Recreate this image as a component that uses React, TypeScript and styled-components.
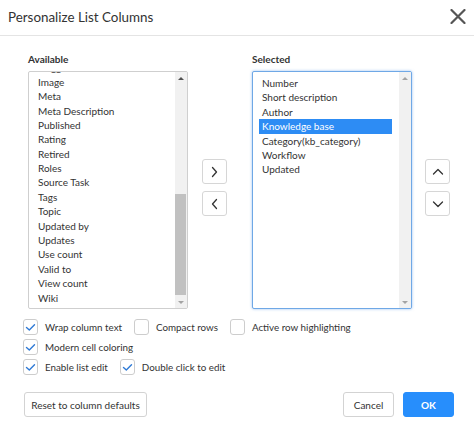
import React from 'react';
import styled, { createGlobalStyle } from 'styled-components';

const Global = createGlobalStyle`
  html, body { margin: 0; padding: 0; background: #fff; }
  body { font-family: Lato, "Noto Sans", sans-serif; color: #333; }
  * { box-sizing: border-box; }
`;

const Dialog = styled.div`
  width: 474px;
  height: 438px;
  display: flex;
  flex-direction: column;
  background: #fff;
`;

const Header = styled.div`
  height: 36px;
  display: flex;
  align-items: center;
  justify-content: space-between;
  padding: 0 8px 2px 8px;
  border-bottom: 1px solid #e4e4e4;
`;

const Title = styled.h1`
  margin: 0;
  font-size: 13.4px;
  font-weight: 400;
  color: #333;
`;

const CloseButton = styled.button`
  border: 0;
  background: none;
  padding: 0;
  width: 16px;
  height: 16px;
  display: flex;
  align-items: center;
  justify-content: center;
  cursor: pointer;
`;

const Body = styled.div`
  display: flex;
  flex-direction: column;
  padding: 17px 20px 0 23px;
`;

const Columns = styled.div`
  display: grid;
  grid-template-columns: 160px 14px 25px 25px 160px 13px 25px;
  grid-template-rows: 12px 238px;
  row-gap: 6px;
  margin-left: 5px;
`;

const Label = styled.div<{ $col: number }>`
  grid-column: ${(p) => p.$col};
  grid-row: 1;
  font-size: 10px;
  font-weight: 700;
  line-height: 12px;
  color: #333;
`;

const ListBox = styled.div<{ $col: number; $focused?: boolean }>`
  grid-column: ${(p) => p.$col};
  grid-row: 2;
  display: flex;
  border: 1px solid ${(p) => (p.$focused ? '#6fa8e6' : '#cfcfcf')};
  border-radius: 2px;
  box-shadow: ${(p) => (p.$focused ? '0 0 3px rgba(70,140,230,0.55)' : 'none')};
  background: #fff;
  overflow: hidden;
`;

const ListArea = styled.div<{ $end?: boolean }>`
  flex: 1;
  display: flex;
  flex-direction: column;
  justify-content: ${(p) => (p.$end ? 'flex-end' : 'flex-start')};
  overflow: hidden;
  padding: 4px 7px 3px 6px;
`;

const Option = styled.div<{ $selected?: boolean }>`
  flex: none;
  font-size: 10px;
  line-height: 14.4px;
  height: 14.4px;
  padding-left: 3px;
  white-space: nowrap;
  color: ${(p) => (p.$selected ? '#fff' : '#333')};
  background: ${(p) => (p.$selected ? '#2d8cf4' : 'transparent')};
`;

const ScrollBar = styled.div`
  width: 12px;
  flex: none;
  background: #f1f1f1;
  display: flex;
  flex-direction: column;
`;

const ScrollArrow = styled.div<{ $down?: boolean; $active?: boolean }>`
  height: 12px;
  flex: none;
  display: flex;
  align-items: center;
  justify-content: center;
  &::before {
    content: '';
    width: 0;
    height: 0;
    border-left: 3px solid transparent;
    border-right: 3px solid transparent;
    ${(p) =>
      p.$down
        ? `border-top: 3px solid ${p.$active ? '#505050' : '#a3a3a3'};`
        : `border-bottom: 3px solid ${p.$active ? '#505050' : '#a3a3a3'};`}
  }
`;

const Track = styled.div`
  flex: 1;
  display: flex;
  flex-direction: column;
  justify-content: flex-end;
  padding: 0 1px 1px 0;
`;

const Thumb = styled.div<{ $size: number }>`
  height: ${(p) => p.$size}px;
  background: #c1c1c1;
`;

const Stack = styled.div<{ $col: number }>`
  grid-column: ${(p) => p.$col};
  grid-row: 2;
  display: flex;
  flex-direction: column;
  justify-content: center;
  gap: 7px;
  padding-bottom: 5px;
`;

const IconButton = styled.button`
  width: 25px;
  height: 25px;
  padding: 0;
  border: 1px solid #d6d6d6;
  border-radius: 3px;
  background: #fff;
  display: flex;
  align-items: center;
  justify-content: center;
  cursor: pointer;
`;

const Options = styled.div`
  display: flex;
  flex-direction: column;
  margin-top: 8px;
`;

const OptionRow = styled.div`
  display: flex;
  align-items: center;
  height: 20px;
`;

const CheckLabel = styled.label`
  display: flex;
  align-items: center;
  gap: 7px;
  margin-right: 12px;
  font-size: 9.8px;
  color: #333;
  white-space: nowrap;
`;

const CheckBox = styled.span<{ $checked?: boolean }>`
  width: 15px;
  height: 16px;
  border: 1px solid #cdcdcd;
  border-radius: 3px;
  background: #fff;
  display: flex;
  align-items: center;
  justify-content: center;
`;

const Footer = styled.div`
  display: flex;
  justify-content: space-between;
  align-items: center;
  margin-top: 15px;
  padding-left: 1px;
`;

const ButtonGroup = styled.div`
  display: flex;
  gap: 9px;
`;

const Button = styled.button<{ $primary?: boolean; $width: number }>`
  width: ${(p) => p.$width}px;
  height: 25px;
  padding: 0;
  border-radius: 3px;
  border: 1px solid ${(p) => (p.$primary ? '#278efc' : '#d3d3d3')};
  background: ${(p) => (p.$primary ? '#278efc' : '#fff')};
  color: ${(p) => (p.$primary ? '#fff' : '#333')};
  font-family: Lato, "Noto Sans", sans-serif;
  font-size: 10px;
  font-weight: ${(p) => (p.$primary ? 700 : 400)};
  cursor: pointer;
`;

const Chevron = ({ dir }: { dir: 'left' | 'right' | 'up' | 'down' }) => {
  const d = {
    right: 'M3.5 1.5 L7.5 6 L3.5 10.5',
    left: 'M7.5 1.5 L3.5 6 L7.5 10.5',
    up: 'M1.5 8 L6 3.5 L10.5 8',
    down: 'M1.5 4 L6 8.5 L10.5 4',
  }[dir];
  return (
    <svg width="12" height="12" viewBox="0 0 12 12">
      <path d={d} fill="none" stroke="#333" strokeWidth="1.3" strokeLinecap="round" strokeLinejoin="round" />
    </svg>
  );
};

const Check = () => (
  <svg width="11" height="9" viewBox="0 0 11 9">
    <path d="M1.5 4.5 L4.3 7 L9.5 1.8" fill="none" stroke="#2f7ad6" strokeWidth="1.4" strokeLinecap="round" strokeLinejoin="round" />
  </svg>
);

const available = [
  'Flagged',
  'Image', 'Meta', 'Meta Description', 'Published', 'Rating', 'Retired', 'Roles',
  'Source Task', 'Tags', 'Topic', 'Updated by', 'Updates', 'Use count', 'Valid to',
  'View count', 'Wiki',
];

const selected = [
  'Number', 'Short description', 'Author', 'Knowledge base',
  'Category(kb_category)', 'Workflow', 'Updated',
];

const Opt = ({ label, checked }: { label: string; checked?: boolean }) => (
  <CheckLabel>
    <CheckBox $checked={checked}>{checked && <Check />}</CheckBox>
    {label}
  </CheckLabel>
);

export default function App() {
  return (
    <Dialog>
      <Global />
      <Header>
        <Title>Personalize List Columns</Title>
        <CloseButton aria-label="Close">
          <svg width="16" height="15" viewBox="0 0 16 15">
            <path d="M1.5 1 L14.5 14 M14.5 1 L1.5 14" stroke="#555" strokeWidth="2.2" strokeLinecap="round" />
          </svg>
        </CloseButton>
      </Header>
      <Body>
        <Columns>
          <Label $col={1}>Available</Label>
          <ListBox $col={1}>
            <ListArea $end>
              {available.map((a) => (
                <Option key={a}>{a}</Option>
              ))}
            </ListArea>
            <ScrollBar>
              <ScrollArrow $active />
              <Track>
                <Thumb $size={101} />
              </Track>
              <ScrollArrow $down />
            </ScrollBar>
          </ListBox>
          <Stack $col={3}>
            <IconButton aria-label="Add"><Chevron dir="right" /></IconButton>
            <IconButton aria-label="Remove"><Chevron dir="left" /></IconButton>
          </Stack>
          <Label $col={5}>Selected</Label>
          <ListBox $col={5} $focused>
            <ListArea>
              {selected.map((s) => (
                <Option key={s} $selected={s === 'Knowledge base'}>{s}</Option>
              ))}
            </ListArea>
            <ScrollBar>
              <ScrollArrow />
              <Track />
              <ScrollArrow $down />
            </ScrollBar>
          </ListBox>
          <Stack $col={7}>
            <IconButton aria-label="Move up"><Chevron dir="up" /></IconButton>
            <IconButton aria-label="Move down"><Chevron dir="down" /></IconButton>
          </Stack>
        </Columns>
        <Options>
          <OptionRow>
            <Opt label="Wrap column text" checked />
            <Opt label="Compact rows" />
            <Opt label="Active row highlighting" />
          </OptionRow>
          <OptionRow>
            <Opt label="Modern cell coloring" checked />
          </OptionRow>
          <OptionRow>
            <Opt label="Enable list edit" checked />
            <Opt label="Double click to edit" checked />
          </OptionRow>
        </Options>
        <Footer>
          <Button $width={123}>Reset to column defaults</Button>
          <ButtonGroup>
            <Button $width={51}>Cancel</Button>
            <Button $width={51} $primary>OK</Button>
          </ButtonGroup>
        </Footer>
      </Body>
    </Dialog>
  );
}
